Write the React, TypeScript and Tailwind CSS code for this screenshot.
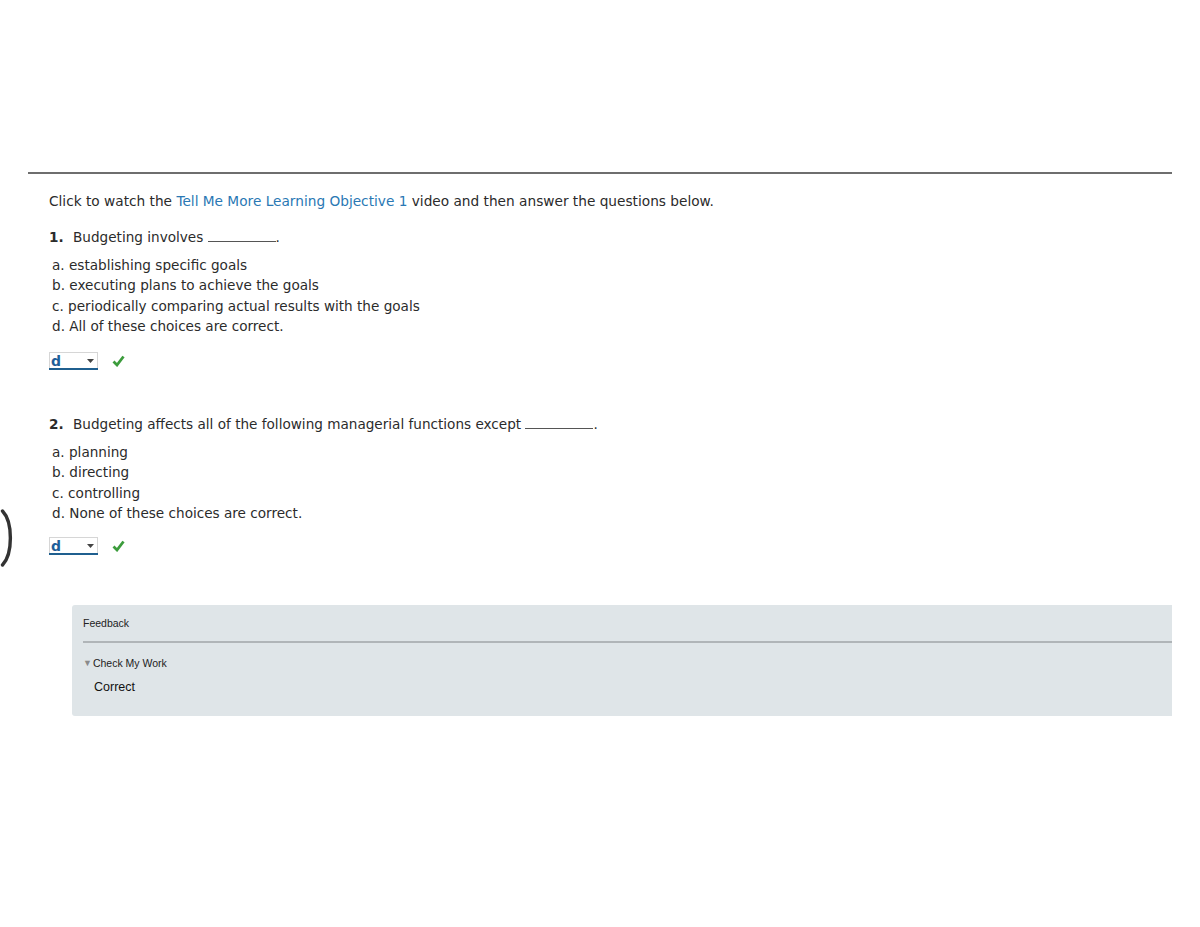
import React from "react";

const font = { fontFamily: '"DejaVu Sans", Verdana, sans-serif' };

function Dropdown() {
  return (
    <div className="flex items-center gap-[14px]">
      <div className="relative flex h-[17px] w-[49px] items-center border border-[#d6d6d6] bg-white">
        <span className="ml-[1px] text-[14px] font-bold leading-none text-[#1f5f99]">d</span>
        <svg className="absolute right-[3px] top-[6px]" width="7" height="4" viewBox="0 0 7 4">
          <path d="M0 0h7L3.5 4z" fill="#444" />
        </svg>
        <div className="absolute -bottom-[2px] -left-[1px] h-[2px] w-[49px] bg-[#1f5f8f]" />
      </div>
      <svg width="13" height="12" viewBox="0 0 13 12">
        <path d="M1.5 6.5l3.5 3.5L11.5 1.5" fill="none" stroke="#3c9c3c" strokeWidth="2.8" />
      </svg>
    </div>
  );
}

function Question({
  num,
  text,
  options,
}: {
  num: string;
  text: string;
  options: string[];
}) {
  return (
    <div className="text-[#2b2b2b]">
      <div className="flex items-baseline text-[13.6px] leading-[16px]">
        <span className="w-[24px] font-bold">{num}</span>
        <span>
          {text} <span className="inline-block w-[68px] border-b border-[#555] align-baseline" />.
        </span>
      </div>
      <div className="mt-[10px] flex flex-col pl-[3px] text-[13.6px] leading-[20.3px]">
        {options.map((o) => (
          <div key={o}>{o}</div>
        ))}
      </div>
    </div>
  );
}

export default function App() {
  return (
    <div className="min-h-[927px] bg-white pt-[172px]" style={font}>
      <div className="mx-[28px] h-[2px] bg-[#6e6e6e]" />
      <div className="pl-[49px] pt-[19px]">
        <p className="text-[13.7px] leading-[16px] text-[#2b2b2b]">
          Click to watch the <span className="text-[#2a78b4]">Tell Me More Learning Objective 1</span> video and then
          answer the questions below.
        </p>
        <div className="mt-[20px]">
          <Question
            num="1."
            text="Budgeting involves"
            options={[
              "a. establishing specific goals",
              "b. executing plans to achieve the goals",
              "c. periodically comparing actual results with the goals",
              "d. All of these choices are correct.",
            ]}
          />
          <div className="mt-[16px]">
            <Dropdown />
          </div>
        </div>
        <div className="relative mt-[47px]">
          <Question
            num="2."
            text="Budgeting affects all of the following managerial functions except"
            options={["a. planning", "b. directing", "c. controlling", "d. None of these choices are correct."]}
          />
          <div className="mt-[14px]">
            <Dropdown />
          </div>
          <svg className="absolute -left-[49px] top-[93px]" width="14" height="58" viewBox="0 0 14 58">
            <path d="M2.5 2 C13 13, 13 45, 2.5 56" fill="none" stroke="#333" strokeWidth="3.4" strokeLinecap="round" />
          </svg>
        </div>
      </div>
      <div className="ml-[72px] mr-[28px] mt-[51px] rounded-l-[3px] bg-[#dfe5e8] pb-[21px]" style={{ fontFamily: '"Liberation Sans", Arial, sans-serif' }}>
        <div className="pl-[11px] pt-[12px] text-[10.5px] leading-[12px] text-[#222]">Feedback</div>
        <div className="ml-[11px] mt-[12px] h-[2px] bg-[#b0b5b8]" />
        <div className="mt-[14px] flex items-center pl-[11px] text-[10.5px] leading-[12px] text-[#222]">
          <span className="mr-[1px] text-[9px] text-[#8a8a8a]">▼</span>Check My Work
        </div>
        <div className="mt-[11px] pl-[22px] text-[12.5px] leading-[15px] text-[#111]">Correct</div>
      </div>
    </div>
  );
}
